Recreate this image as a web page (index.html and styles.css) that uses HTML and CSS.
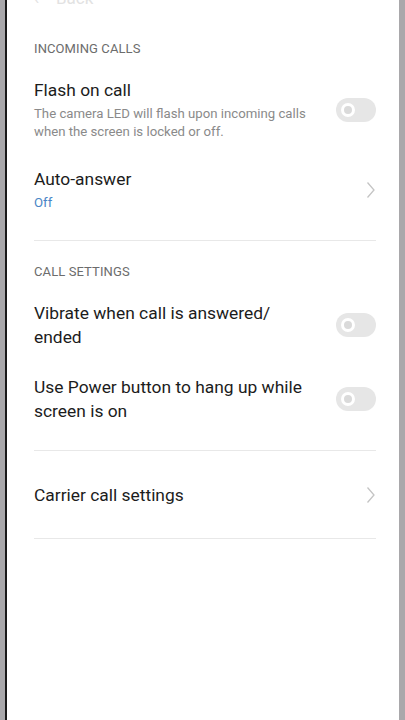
FILE: index.html
```html
<!DOCTYPE html>
<html>
<head>
<meta charset="utf-8">
<link rel="stylesheet" href="styles.css">
</head>
<body>
<div class="frame">
  <div class="screen">
    <div class="topbar"><span class="back">‹&nbsp;&nbsp;&nbsp;&nbsp;Back</span></div>

    <div class="section-title">Incoming calls</div>

    <div class="item">
      <div class="text">
        <div class="title">Flash on call</div>
        <div class="desc">The camera LED will flash upon incoming calls when the screen is locked or off.</div>
      </div>
      <div class="toggle"><span class="thumb"></span></div>
    </div>

    <div class="item">
      <div class="text">
        <div class="title">Auto-answer</div>
        <div class="value">Off</div>
      </div>
      <svg class="chev" width="10" height="18" viewBox="0 0 10 18"><path d="M1.5 1.5 L8 9 L1.5 16.5" fill="none" stroke="#c4c4c4" stroke-width="1.3"/></svg>
    </div>

    <div class="divider"></div>

    <div class="section-title s2">Call settings</div>

    <div class="item">
      <div class="text">
        <div class="title">Vibrate when call is answered/ ended</div>
      </div>
      <div class="toggle"><span class="thumb"></span></div>
    </div>

    <div class="item">
      <div class="text">
        <div class="title">Use Power button to hang up while screen is on</div>
      </div>
      <div class="toggle"><span class="thumb"></span></div>
    </div>

    <div class="divider d2"></div>

    <div class="item tall">
      <div class="text">
        <div class="title">Carrier call settings</div>
      </div>
      <svg class="chev" width="10" height="18" viewBox="0 0 10 18"><path d="M1.5 1.5 L8 9 L1.5 16.5" fill="none" stroke="#c4c4c4" stroke-width="1.3"/></svg>
    </div>

    <div class="divider d3"></div>
  </div>
</div>
</body>
</html>
```

FILE: styles.css
```css
html, body {
  margin: 0;
  padding: 0;
  height: 100%;
}
body {
  background: #a9a8ab;
  font-family: Roboto, "Liberation Sans", sans-serif;
}
.frame {
  height: 720px;
  padding-left: 5px;
  padding-right: 6px;
  box-sizing: border-box;
  display: flex;
}
.screen {
  flex: 1;
  background: #ffffff;
  border-left: 2px solid #1a1a1a;
  padding: 0 23px 0 27px;
  box-sizing: border-box;
  overflow: hidden;
}
.topbar {
  height: 8px;
  overflow: hidden;
}
.back {
  display: block;
  margin-top: -12px;
  font-size: 17px;
  line-height: 20px;
  color: #e2e2e2;
  white-space: pre;
}
.section-title {
  padding: 32px 0 7px;
  font-size: 13px;
  line-height: 18px;
  color: #6c6c6c;
  text-transform: uppercase;
  letter-spacing: 0.1px;
}
.section-title.s2 {
  padding-top: 22px;
}
.item {
  display: flex;
  align-items: center;
  padding: 13px 0;
}
.item.tall {
  padding: 32px 0 31px;
}
.text {
  flex: 1;
  min-width: 0;
  padding-right: 30px;
}
.title {
  font-size: 17.4px;
  line-height: 24px;
  color: #1c1c1c;
}
.desc {
  margin-top: 3px;
  font-size: 13.2px;
  line-height: 18px;
  color: #8a8a8a;
}
.value {
  margin-top: 3px;
  font-size: 13.2px;
  line-height: 18px;
  color: #4a86c6;
}
.toggle {
  flex: none;
  width: 40px;
  height: 24px;
  border-radius: 12px;
  background: #e6e6e6;
  display: flex;
  align-items: center;
  padding-left: 5px;
  box-sizing: border-box;
}
.thumb {
  width: 8px;
  height: 8px;
  border-radius: 50%;
  background: #dadada;
  border: 3px solid #ffffff;
}
.chev {
  flex: none;
}
.divider {
  height: 1px;
  background: #e8e8e8;
  margin-top: 15px;
}
.divider.d2 {
  margin-top: 14px;
}
.divider.d3 {
  margin-top: 0;
}
```
